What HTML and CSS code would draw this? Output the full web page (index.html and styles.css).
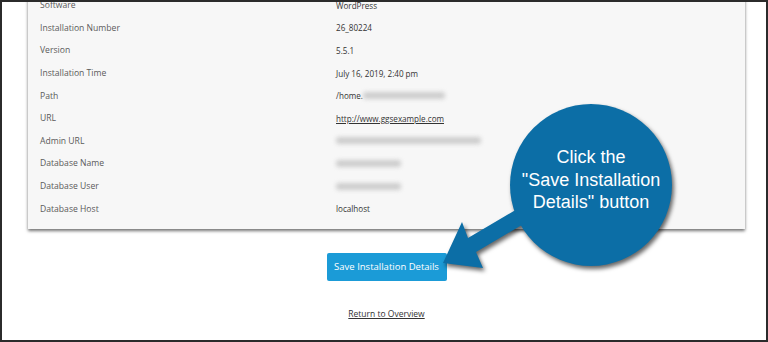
FILE: index.html
```html
<!DOCTYPE html>
<html>
<head>
  <meta charset="UTF-8" />
  <title>Installation Details</title>
  <link rel="stylesheet" href="styles.css">
</head>
<body>
  <div class="frame">
    <div class="card">
      <div class="row"><span class="label">Software</span><span class="value">WordPress</span></div>
      <div class="row"><span class="label">Installation Number</span><span class="value">26_80224</span></div>
      <div class="row"><span class="label">Version</span><span class="value">5.5.1</span></div>
      <div class="row"><span class="label">Installation Time</span><span class="value">July 16, 2019, 2:40 pm</span></div>
      <div class="row"><span class="label">Path</span><span class="value">/home.<span class="blur w82"></span></span></div>
      <div class="row"><span class="label">URL</span><span class="value"><a href="#">http://www.ggsexample.com</a></span></div>
      <div class="row"><span class="label">Admin URL</span><span class="value"><span class="blur w145"></span></span></div>
      <div class="row"><span class="label">Database Name</span><span class="value"><span class="blur w65"></span></span></div>
      <div class="row"><span class="label">Database User</span><span class="value"><span class="blur w65"></span></span></div>
      <div class="row"><span class="label">Database Host</span><span class="value">localhost</span></div>
    </div>

    <div class="actions">
      <button class="save">Save Installation Details</button>
      <a class="back" href="#">Return to Overview</a>
    </div>

    <!-- callout drawn over the page -->
    <svg class="callout" width="768" height="342" viewBox="0 0 768 342">
      <g class="bubble">
        <polygon points="443,263 462,222 468,238 536,198 544,212 476,252 483,268" fill="#0c6ea6" />
        <circle cx="591" cy="185" r="81" fill="#0c6ea6" />
      </g>
      <text x="591" y="163" text-anchor="middle">Click the</text>
      <text x="591" y="186" text-anchor="middle">"Save Installation</text>
      <text x="591" y="208" text-anchor="middle">Details" button</text>
    </svg>
  </div>
</body>
</html>
```

FILE: styles.css
```css
body {
  margin: 0;
  padding: 0;
  font-family: 'Open Sans', sans-serif;
  background-color: #fff;
}
.frame {
  position: relative;
  width: 768px;
  height: 342px;
  box-sizing: border-box;
  border: 2px solid #2b2b2b;
  overflow: hidden;
  background-color: #fff;
}
.card {
  margin: -8px 0 0 26px;
  width: 717px;
  padding-bottom: 9px;
  background-color: #f7f7f7;
  box-shadow: 0 2px 3px rgba(0,0,0,0.55);
}
.row {
  display: flex;
  align-items: center;
  height: 22.6px;
  padding-left: 12px;
  font-size: 8.6px;
}
.label {
  width: 296px;
  color: #5a5a5a;
}
.value {
  color: #333;
  font-size: 8.1px;
  display: flex;
  align-items: center;
}
.value a {
  color: #333;
}
.blur {
  display: inline-block;
  height: 7px;
  background-color: #cdcdcd;
  border-radius: 3px;
  filter: blur(2px);
}
.w82 { width: 82px; }
.w145 { width: 145px; }
.w65 { width: 65px; }
.actions {
  display: flex;
  flex-direction: column;
  align-items: center;
  width: 717px;
  margin-left: 26px;
  padding-top: 24px;
}
.save {
  width: 120px;
  height: 28px;
  border: none;
  border-radius: 2px;
  background-color: #1b9bd7;
  color: white;
  font-family: 'Open Sans', sans-serif;
  font-size: 9.5px;
  padding: 0;
  cursor: pointer;
}
.back {
  margin-top: 27px;
  font-size: 8.5px;
  color: #333;
}
.callout {
  position: absolute;
  left: -2px;
  top: -2px;
}
.bubble {
  filter: drop-shadow(2px 3px 2px rgba(0,0,0,0.6));
}
.callout text {
  fill: white;
  font-family: 'Liberation Sans', Arial, sans-serif;
  font-size: 18px;
}
```
